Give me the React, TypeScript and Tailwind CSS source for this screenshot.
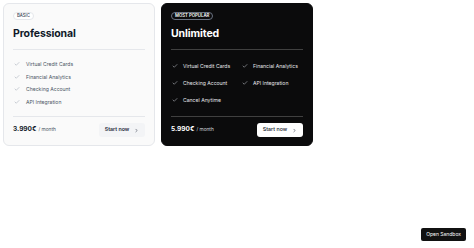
import { Check, ChevronRight } from "lucide-react";

const basicFeatures = [
  "Virtual Credit Cards",
  "Financial Analytics",
  "Checking Account",
  "API Integration",
];

const unlimitedFeatures = [
  "Virtual Credit Cards",
  "Financial Analytics",
  "Checking Account",
  "API Integration",
  "Cancel Anytime",
];

export default function App() {
  return (
    <div
      className="relative w-[474px] h-[248px] bg-white"
      style={{ fontFamily: "Inter, 'Liberation Sans', sans-serif" }}
    >
      <div className="flex gap-[6px] p-[3px]">
        {/* basic plan */}
        <div className="w-[152px] h-[143px] flex flex-col rounded-[6px] border border-gray-200 bg-[#fafafa] px-[9px] pt-[8px]">
          <div className="flex">
            <span className="flex h-[8px] items-center rounded-full border border-gray-200 bg-white px-[3px] text-[4.3px] font-medium text-gray-700">
              BASIC
            </span>
          </div>
          <h2 className="mt-[7px] text-[10.5px] leading-[14px] font-bold tracking-[-0.1px] text-gray-900">
            Professional
          </h2>
          <div className="mt-[8px] border-t border-gray-200" />
          <ul className="flex flex-1 flex-col justify-center gap-[6.7px]">
            {basicFeatures.map((f) => (
              <li key={f} className="flex h-[6px] items-center gap-[6px] pl-[1px]">
                <Check className="w-[6px] h-[6px] text-gray-400" strokeWidth={2} />
                <span className="text-[5.1px] leading-[6px] text-gray-600">{f}</span>
              </li>
            ))}
          </ul>
          <div className="border-t border-gray-200" />
          <div className="flex h-[28px] items-center justify-between pb-[2px]">
            <div className="flex items-baseline gap-[2px]">
              <span className="text-[6.5px] font-bold text-gray-900">3.990€</span>
              <span className="text-[4.8px] text-gray-600">/ month</span>
            </div>
            <button className="flex h-[14px] w-[46px] items-center justify-center gap-[5px] rounded-[3px] bg-gray-100 text-[5.3px] font-semibold text-gray-800">
              Start now
              <ChevronRight className="w-[5px] h-[5px]" strokeWidth={2.5} />
            </button>
          </div>
        </div>

        {/* unlimited plan */}
        <div className="w-[152px] h-[143px] flex flex-col rounded-[6px] border border-[#0b0b0c] bg-[#0b0b0c] px-[9px] pt-[8px]">
          <div className="flex">
            <span className="flex h-[8px] items-center rounded-full border border-gray-500 px-[3px] text-[4.3px] font-semibold text-white">
              MOST POPULAR
            </span>
          </div>
          <h2 className="mt-[7px] text-[10.5px] leading-[14px] font-bold tracking-[-0.1px] text-white">
            Unlimited
          </h2>
          <div className="mt-[8px] border-t border-neutral-700" />
          <ul className="grid flex-1 grid-cols-2 content-center gap-y-[11px] gap-x-[8px]">
            {unlimitedFeatures.map((f) => (
              <li key={f} className="flex h-[6px] items-center gap-[5px] pl-[1px]">
                <Check className="w-[6px] h-[6px] text-gray-300" strokeWidth={2} />
                <span className="text-[5.1px] leading-[6px] text-gray-200">{f}</span>
              </li>
            ))}
          </ul>
          <div className="border-t border-neutral-700" />
          <div className="flex h-[28px] items-center justify-between pb-[2px]">
            <div className="flex items-baseline gap-[2px]">
              <span className="text-[6.5px] font-bold text-white">5.990€</span>
              <span className="text-[4.8px] text-gray-300">/ month</span>
            </div>
            <button className="flex h-[14px] w-[46px] items-center justify-center gap-[5px] rounded-[3px] bg-white text-[5.3px] font-medium text-gray-900">
              Start now
              <ChevronRight className="w-[5px] h-[5px]" strokeWidth={2.5} />
            </button>
          </div>
        </div>
      </div>

      <button className="absolute right-[8px] bottom-[7px] h-[13px] rounded-[2px] bg-[#111] px-[5px] text-[5px] text-white">
        Open Sandbox
      </button>
    </div>
  );
}
